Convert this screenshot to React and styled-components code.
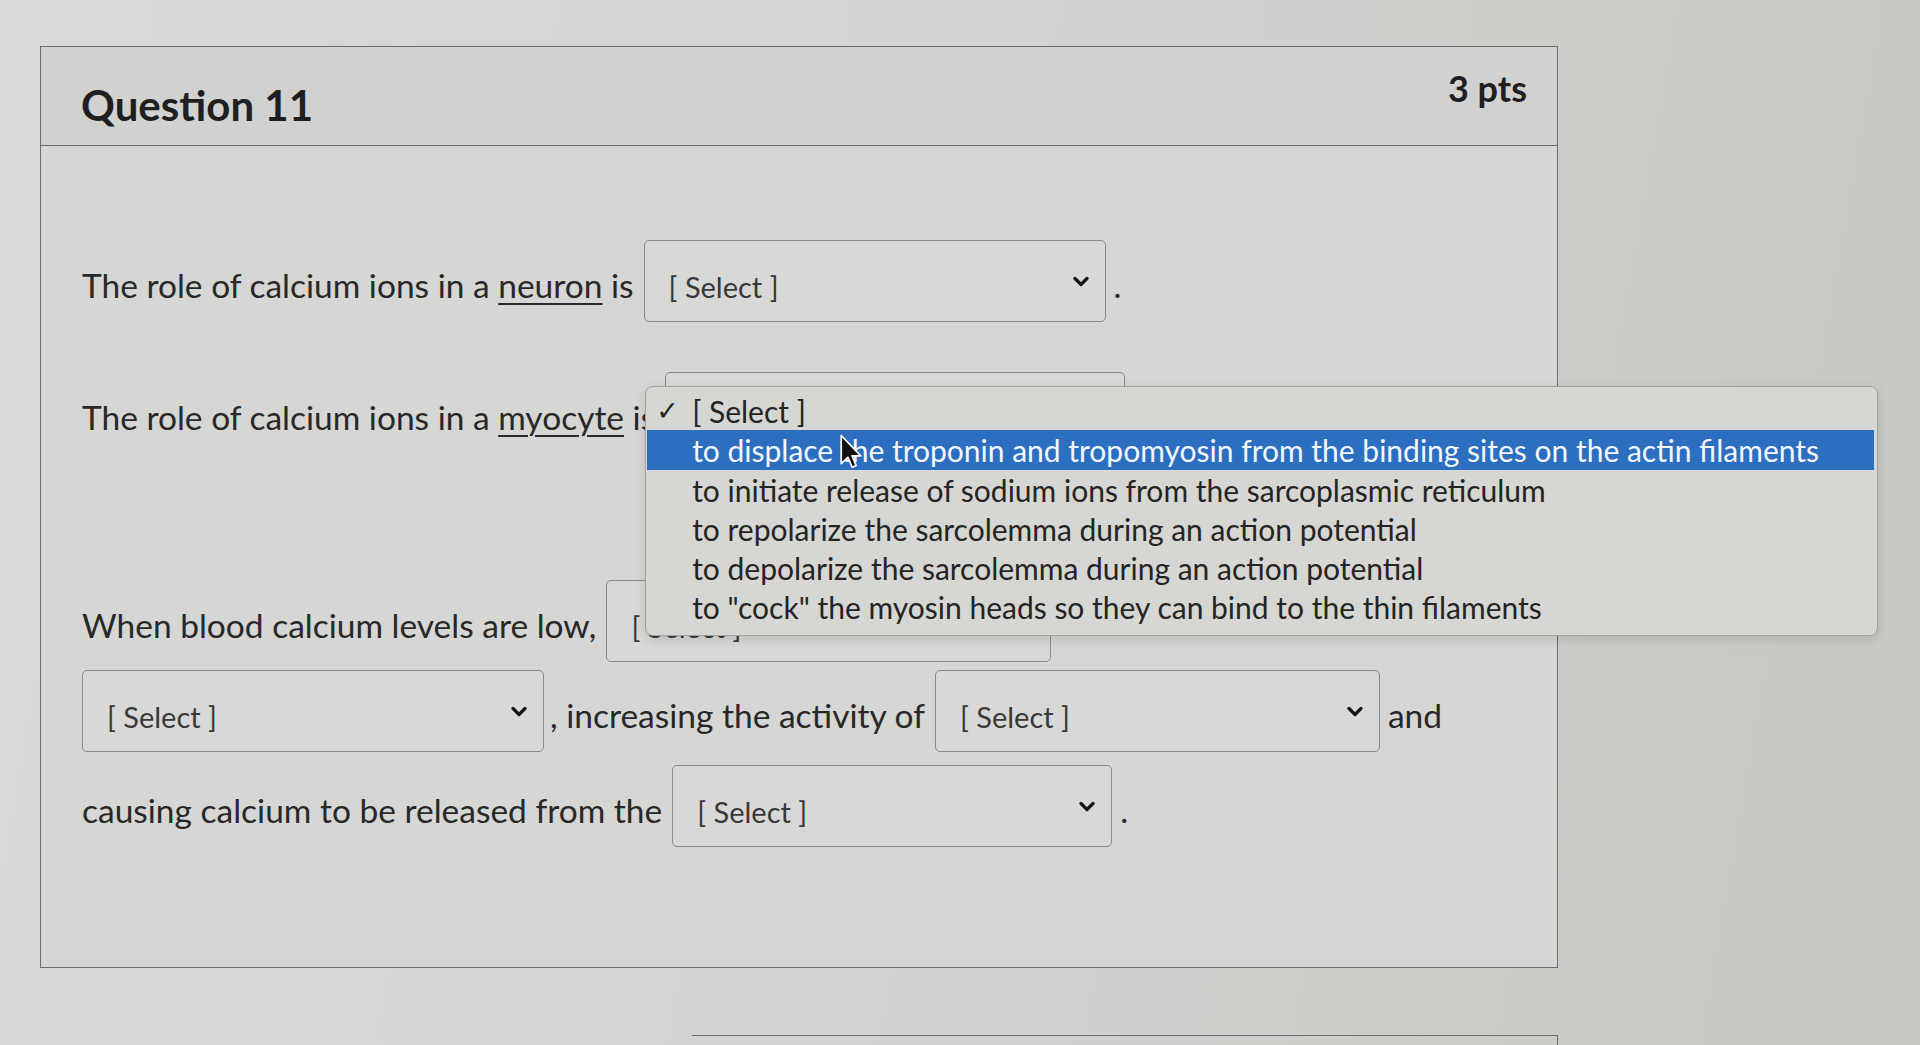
import React from "react";
import styled, { createGlobalStyle } from "styled-components";

const GlobalStyle = createGlobalStyle`
  html, body { margin: 0; padding: 0; }
  body {
    width: 1920px;
    height: 1045px;
    overflow: hidden;
    background: linear-gradient(100deg, #d9d9db 0%, #d3d4d2 45%, #c7c8c3 100%);
    font-family: Lato, "Open Sans", "DejaVu Sans", sans-serif;
    color: #282828;
  }
`;

const Page = styled.div`
  width: 1920px;
  height: 1045px;
  box-sizing: border-box;
  padding: 46px 0 0 40px;
  display: flex;
  flex-direction: column;
`;

const Card = styled.section`
  width: 1518px;
  height: 922px;
  flex: none;
  box-sizing: border-box;
  border: 1.5px solid #6c6c6c;
  background: #d6d6d4;
  display: flex;
  flex-direction: column;
`;

const Header = styled.header`
  height: 99px;
  flex: none;
  box-sizing: border-box;
  display: flex;
  align-items: center;
  justify-content: space-between;
  padding: 0 30px 0 40px;
  background: #d1d1d0;
  border-bottom: 1.5px solid #6c6c6c;
`;

const Title = styled.h2`
  margin: 17px 0 0;
  font-size: 42px;
  font-weight: 700;
  color: #1f1f1f;
`;

const Points = styled.div`
  margin-bottom: 16px;
  font-size: 36px;
  font-weight: 700;
  color: #1f1f1f;
`;

const Body = styled.div`
  padding: 94px 41px 0;
`;

const Line = styled.div`
  display: flex;
  align-items: baseline;
  margin-top: ${(p) => p.$mt || 0}px;
  font-size: 33.5px;
  white-space: nowrap;
  color: #282828;
`;

const Under = styled.span`
  text-decoration: underline;
  text-decoration-thickness: 2px;
  text-underline-offset: 5px;
`;

const Box = styled.div`
  position: relative;
  display: inline-flex;
  align-items: center;
  justify-content: space-between;
  box-sizing: border-box;
  width: ${(p) => p.$w}px;
  height: 82px;
  margin: 0 ${(p) => (p.$mr ?? 8)}px 0 ${(p) => (p.$ml ?? 10)}px;
  padding: 0 16px 0 24px;
  border: 1.5px solid #8a8a88;
  border-radius: 5px;
  background: #d8d8d6;
  font-size: 29px;
  color: #383838;
`;

const BoxLabel = styled.span`
  padding-top: 10px;
`;

const Chevron = () => (
  <svg width="16" height="11" viewBox="0 0 16 11">
    <path d="M2 2.5 L8 8.5 L14 2.5" fill="none" stroke="#161616" strokeWidth="3.2" strokeLinecap="round" strokeLinejoin="round" />
  </svg>
);

const Select = ({ w, ml, mr, children }) => (
  <Box $w={w} $ml={ml} $mr={mr}>
    <BoxLabel>[ Select ]</BoxLabel>
    <Chevron />
    {children}
  </Box>
);

const Menu = styled.ul`
  position: absolute;
  left: -21px;
  top: 13px;
  z-index: 5;
  width: 1233px;
  height: 250px;
  box-sizing: border-box;
  margin: 0;
  padding: 4px 3px 0 1px;
  list-style: none;
  background: #d6d6d2;
  border: 1px solid #a2a29f;
  border-radius: 8px;
  box-shadow: 0 4px 12px rgba(0, 0, 0, 0.12);
  font-size: 30px;
  color: #242424;
`;

const Option = styled.li`
  position: relative;
  height: ${(p) => (p.$active ? 40 : 39)}px;
  display: flex;
  align-items: center;
  padding-left: 45px;
  background: ${(p) => (p.$active ? "#2c6fc1" : "transparent")};
  color: ${(p) => (p.$active ? "#f5f7fb" : "#242424")};
`;

const Check = styled.span`
  position: absolute;
  left: 9px;
  font-family: "DejaVu Sans", sans-serif;
  font-size: 27px;
`;

const Cursor = styled.svg`
  position: absolute;
  left: 194px;
  top: 47px;
  z-index: 6;
`;

const NextCardEdge = styled.div`
  flex: 1;
  width: 866px;
  box-sizing: border-box;
  margin: 67px 0 0 652px;
  border-top: 1.5px solid #6c6c6c;
  border-right: 1.5px solid #6c6c6c;
`;

const options = [
  "to displace the troponin and tropomyosin from the binding sites on the actin filaments",
  "to initiate release of sodium ions from the sarcoplasmic reticulum",
  "to repolarize the sarcolemma during an action potential",
  "to depolarize the sarcolemma during an action potential",
  'to "cock" the myosin heads so they can bind to the thin filaments',
];

export default function App() {
  return (
    <>
      <GlobalStyle />
      <Page>
        <Card>
          <Header>
            <Title>Question 11</Title>
            <Points>3 pts</Points>
          </Header>
          <Body>
            <Line>
              <span>
                The role of calcium ions in a <Under>neuron</Under> is
              </span>
              <Select w={462} />
              <span>.</span>
            </Line>
            <Line $mt={50}>
              <span>
                The role of calcium ions in a <Under>myocyte</Under> is
              </span>
              <Select w={460}>
                <Menu>
                  <Option>
                    <Check>✓</Check>[ Select ]
                  </Option>
                  {options.map((o, i) => (
                    <Option key={o} $active={i === 0}>
                      {o}
                    </Option>
                  ))}
                  <Cursor width="22" height="36" viewBox="0 0 18 29">
                    <path d="M1 1 L1 24 L6.5 18.8 L10 27 L13.2 25.6 L9.8 17.6 L17 17.6 Z" fill="#111" stroke="#fff" strokeWidth="1.4" strokeLinejoin="round" />
                  </Cursor>
                </Menu>
              </Select>
              <span>.</span>
            </Line>
            <Line $mt={126}>
              <span>When blood calcium levels are low,</span>
              <Select w={445} />
            </Line>
            <Line $mt={8}>
              <Select w={462} ml={0} mr={6} />
              <span>, increasing the activity of</span>
              <Select w={445} />
              <span>and</span>
            </Line>
            <Line $mt={13}>
              <span>causing calcium to be released from the</span>
              <Select w={440} />
              <span>.</span>
            </Line>
          </Body>
        </Card>
        <NextCardEdge />
      </Page>
    </>
  );
}
